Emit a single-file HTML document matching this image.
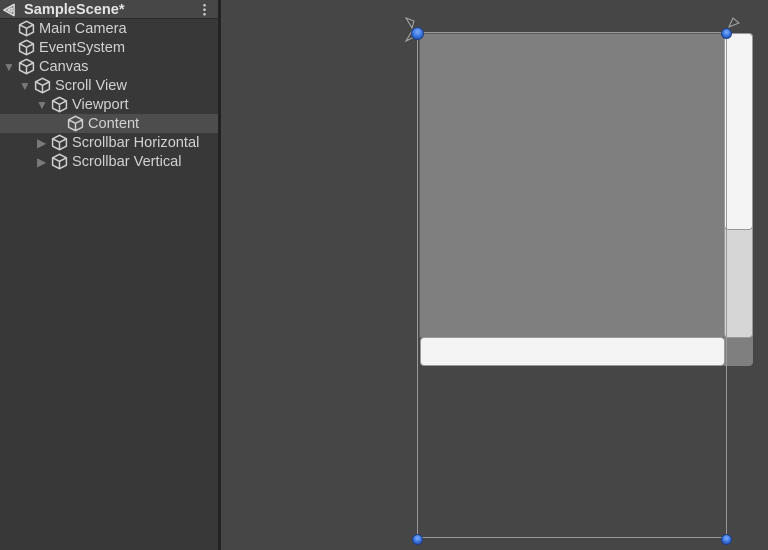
<!DOCTYPE html>
<html><head><style>
*{margin:0;padding:0;box-sizing:border-box}
body{width:768px;height:550px;overflow:hidden;background:#464646;font-family:"Liberation Sans",sans-serif;position:relative}
#left{position:absolute;left:0;top:0;width:218px;height:550px;background:#383838}
#div{position:absolute;left:218px;top:0;width:3px;height:550px;background:#232323}
#hdr{position:absolute;left:0;top:0;width:218px;height:19px;background:#474747;border-bottom:1px solid #2a2a2a}
.row{position:absolute;left:0;width:218px;height:19px;color:#d2d2d2;font-size:14.6px;line-height:20px}
.row svg{position:absolute;top:1px}
.row span{position:absolute;top:0}
.tri{position:absolute;top:0;color:#7a7a7a;font-size:12px}
.a{position:absolute}
.dot{position:absolute;width:11px;height:11px;border-radius:50%;background:radial-gradient(circle at 50% 35%,#7fb0ff,#2f6bd8 60%,#1d4aa0);border:1px solid #203f80}
</style></head><body>
<div id="left"></div>
<div id="hdr"></div>
<svg class="a" style="left:2px;top:2px" width="16" height="16" viewBox="0 0 16 16"><path d="M2 8 L12 2.5 L12 13.5 Z M6 8 L10 6 L10 10 Z" fill="none" stroke="#ddd" stroke-width="1.6" stroke-linejoin="round"/></svg>
<div class="a" style="left:24px;top:2px;color:#e4e4e4;font-size:14.6px;font-weight:bold;line-height:17px">SampleScene*</div>
<div class="a" style="left:203px;top:3px;width:3px;height:13px;background:radial-gradient(circle,#ccc 1.2px,transparent 1.4px) 0 0/3px 4.5px"></div>
<div id="div"></div>

<svg width="0" height="0" style="position:absolute"><defs><symbol id="cube" viewBox="0 0 16 16"><path d="M8 1.2 L14.5 4.5 L14.5 11.5 L8 14.8 L1.5 11.5 L1.5 4.5 Z M1.5 4.5 L8 7.8 L14.5 4.5 M8 7.8 L8 14.8" fill="none" stroke="#cfcfcf" stroke-width="1.4" stroke-linejoin="round"/></symbol></defs></svg>

<div class="row" style="top:19px"><svg style="left:18px" width="17" height="17"><use href="#cube"/></svg><span style="left:39px">Main Camera</span></div>
<div class="row" style="top:38px"><svg style="left:18px" width="17" height="17"><use href="#cube"/></svg><span style="left:39px">EventSystem</span></div>
<div class="row" style="top:57px"><span class="tri" style="left:3px">▼</span><svg style="left:18px" width="17" height="17"><use href="#cube"/></svg><span style="left:39px">Canvas</span></div>
<div class="row" style="top:76px"><span class="tri" style="left:19px">▼</span><svg style="left:34px" width="17" height="17"><use href="#cube"/></svg><span style="left:55px">Scroll View</span></div>
<div class="row" style="top:95px"><span class="tri" style="left:36px">▼</span><svg style="left:51px" width="17" height="17"><use href="#cube"/></svg><span style="left:72px">Viewport</span></div>
<div class="row" style="top:114px;background:#4d4d4d"><svg style="left:67px" width="17" height="17"><use href="#cube"/></svg><span style="left:88px">Content</span></div>
<div class="row" style="top:133px"><span class="tri" style="left:37px">▶</span><svg style="left:51px" width="17" height="17"><use href="#cube"/></svg><span style="left:72px">Scrollbar Horizontal</span></div>
<div class="row" style="top:152px"><span class="tri" style="left:37px">▶</span><svg style="left:51px" width="17" height="17"><use href="#cube"/></svg><span style="left:72px">Scrollbar Vertical</span></div>

<!-- scene -->
<div class="a" style="left:419px;top:33px;width:306px;height:305px;background:#7f7f7f;border:1px solid #5c5c5c"></div>
<div class="a" style="left:724px;top:33px;width:29px;height:333px;background:#7f7f7f;border-radius:0 4px 4px 0"></div>
<div class="a" style="left:724px;top:33px;width:29px;height:305px;background:#d6d6d6;border-radius:0 4px 4px 4px;border:1px solid #999"></div>
<div class="a" style="left:724px;top:33px;width:29px;height:197px;background:#f4f4f4;border-radius:0 4px 4px 4px;border:1px solid #999"></div>
<div class="a" style="left:420px;top:337px;width:305px;height:29px;background:#f4f4f4;border-radius:4px;border:1px solid #999"></div>
<div class="a" style="left:417px;top:32px;width:310px;height:506px;border:1px solid #9a9a9a"></div>
<svg class="a" style="left:402px;top:15px" width="20" height="30"><path d="M4 3 L12 6 L10 13 Z M4 26 L12 22 L10 16 Z" fill="none" stroke="#aaa" stroke-width="1"/></svg>
<svg class="a" style="left:724px;top:15px" width="20" height="20"><path d="M5 12 L9 3 L15 8 Z" fill="none" stroke="#aaa" stroke-width="1"/></svg>
<div class="dot" style="left:411px;top:27px;width:13px;height:13px"></div>
<div class="dot" style="left:721px;top:28px"></div>
<div class="dot" style="left:412px;top:534px"></div>
<div class="dot" style="left:721px;top:534px"></div>
</body></html>
